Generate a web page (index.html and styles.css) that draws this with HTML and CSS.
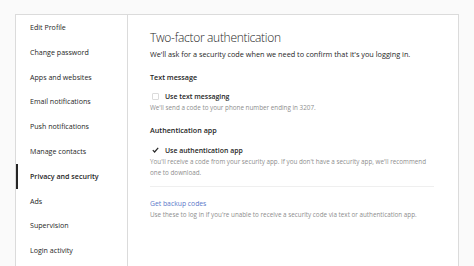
FILE: index.html
```html
<!DOCTYPE html>
<html>
<head>
  <title>Two-factor authentication</title>
  <link rel="stylesheet" href="styles.css">
</head>
<body>
  <div class="card">
    <ul class="menu">
      <li>Edit Profile</li>
      <li>Change password</li>
      <li>Apps and websites</li>
      <li>Email notifications</li>
      <li>Push notifications</li>
      <li>Manage contacts</li>
      <li class="active">Privacy and security</li>
      <li>Ads</li>
      <li>Supervision</li>
      <li>Login activity</li>
    </ul>

    <div class="main">
      <h2>Two-factor authentication</h2>
      <p class="lead">We'll ask for a security code when we need to confirm that it's you logging in.</p>

      <h4>Text message</h4>
      <label class="option">
        <span class="box"></span>
        <span>Use text messaging</span>
      </label>
      <p class="hint">We'll send a code to your phone number ending in 3207.</p>

      <h4>Authentication app</h4>
      <label class="option">
        <span class="tick">
          <svg width="7" height="6" viewBox="0 0 7 6"><path d="M0.8 3.2 L2.6 5 L6.2 0.8" fill="none" stroke="#262626" stroke-width="1.2"/></svg>
        </span>
        <span>Use authentication app</span>
      </label>
      <p class="hint">You'll receive a code from your security app. If you don't have a security app, we'll recommend one to download.</p>

      <hr>

      <a class="link">Get backup codes</a>
      <p class="hint">Use these to log in if you're unable to receive a security code via text or authentication app.</p>
    </div>
  </div>
</body>
</html>
```

FILE: styles.css
```css
body {
  margin: 0;
  padding: 14px 15px 0 15px;
  background: #fafafa;
  font-family: "Open Sans", "Noto Sans", sans-serif;
  color: #262626;
}

.card {
  display: flex;
  background: #fff;
  border: 1px solid #dbdbdb;
  border-bottom: none;
  height: 252px;
}

.menu {
  list-style: none;
  margin: 0;
  padding: 0;
  width: 111px;
  border-right: 1px solid #dbdbdb;
}

.menu li {
  height: 24.8px;
  line-height: 24.8px;
  padding-left: 14px;
  font-size: 7.1px;
  color: #262626;
  white-space: nowrap;
}

.menu li.active {
  border-left: 2px solid #262626;
  padding-left: 12px;
  font-weight: 600;
}

.main {
  flex: 1;
  padding: 14px 24px 0 22px;
}

h2 {
  margin: 0;
  font-size: 12px;
  font-weight: 300;
  letter-spacing: -0.3px;
  line-height: 18px;
  color: #262626;
}

.lead {
  margin: 2px 0 0 0;
  font-size: 7.3px;
  line-height: 11px;
}

h4 {
  margin: 10.5px 0 0 0;
  font-size: 7.2px;
  font-weight: 600;
  line-height: 12px;
}

.option {
  display: flex;
  align-items: center;
  gap: 6px;
  margin-top: 8.5px;
  font-size: 6.9px;
  font-weight: 600;
  line-height: 11px;
}

.box {
  width: 5px;
  height: 5px;
  border: 1px solid #dbdbdb;
  border-radius: 1px;
  margin-left: 2px;
}

.tick {
  display: flex;
  width: 7px;
  margin-left: 2px;
}

.hint {
  margin: 0;
  font-size: 6.3px;
  line-height: 11.5px;
  color: #8e8e8e;
}

hr {
  border: none;
  border-top: 1px solid #efefef;
  margin: 7.5px 0 10.5px 0;
}

.link {
  display: block;
  font-size: 6.8px;
  line-height: 11.5px;
  color: #5a78c9;
}
```
